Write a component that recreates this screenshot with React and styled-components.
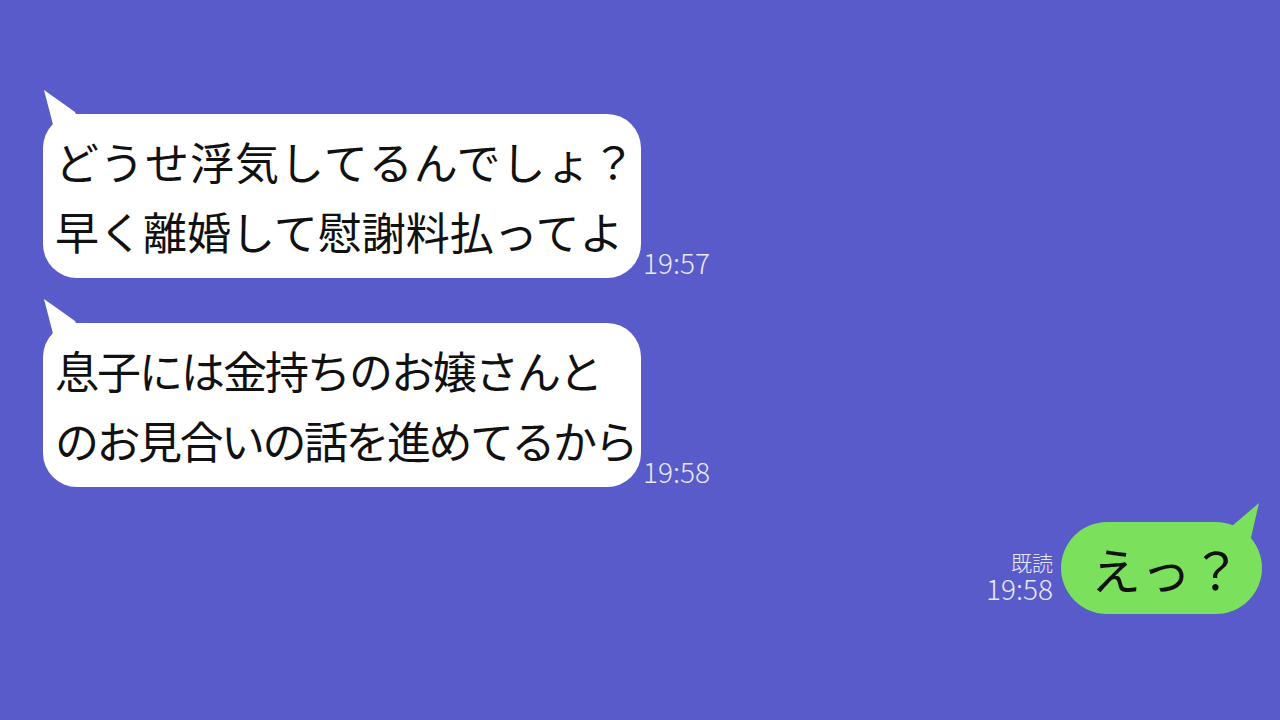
import React from "react";
import styled, { createGlobalStyle } from "styled-components";

const GlobalStyle = createGlobalStyle`
  html, body {
    margin: 0;
    padding: 0;
  }
  body {
    font-family: "Noto Sans CJK JP", "Noto Sans", sans-serif;
  }
`;

const Screen = styled.div`
  width: 1280px;
  height: 720px;
  background: #585bc9;
  display: flex;
  flex-direction: column;
  padding: 114px 18px 0 43px;
  box-sizing: border-box;
  overflow: hidden;
`;

const Row = styled.div`
  display: flex;
  align-items: flex-end;
  justify-content: ${(props) => (props.mine ? "flex-end" : "flex-start")};
  margin-top: ${(props) => props.gap || 0}px;
`;

const Bubble = styled.div`
  position: relative;
  box-sizing: border-box;
  width: ${(props) => props.width}px;
  height: ${(props) => props.height}px;
  border-radius: ${(props) => props.radius}px;
  background: ${(props) => props.color};
  color: #111;
  display: flex;
  flex-direction: column;
  justify-content: center;
  padding-left: ${(props) => props.padLeft}px;
`;

const Line = styled.span`
  display: block;
  font-size: ${(props) => props.size || 44}px;
  line-height: 70px;
  letter-spacing: ${(props) => props.spacing || 0}px;
  white-space: nowrap;
`;

const Tail = styled.svg`
  position: absolute;
  top: ${(props) => props.top}px;
  ${(props) => (props.right ? "right: 0;" : "left: 0;")}
`;

const Time = styled.div`
  color: #e8e8f6;
  font-size: 28px;
  line-height: ${(props) => props.lh || 30}px;
  font-weight: 300;
  margin: 0 0 ${(props) => props.bottom || 0}px ${(props) => props.left || 0}px;
`;

const Meta = styled.div`
  display: flex;
  flex-direction: column;
  align-items: flex-end;
  margin: 0 8px 11px 0;
  color: #e8e8f6;
`;

const Read = styled.div`
  font-size: 21px;
  line-height: 22px;
  font-weight: 300;
`;

const WhiteTail = () => (
  <Tail top={-24} width="50" height="70" viewBox="0 0 50 70">
    <polygon points="1,0 14,50 44,50 32,22" fill="#ffffff" />
  </Tail>
);

const GreenTail = () => (
  <Tail right top={-20} width="34" height="50" viewBox="0 0 34 50">
    <polygon points="31,1 4,24 0,48 20,48 22,40" fill="#7be05b" />
  </Tail>
);

const Incoming = ({ lines, time, gap }) => (
  <Row gap={gap}>
    <Bubble width={598} height={164} radius={34} color="#ffffff" padLeft={12}>
      <WhiteTail />
      {lines.map((l) => (
        <Line key={l.text} spacing={l.spacing}>
          {l.text}
        </Line>
      ))}
    </Bubble>
    <Time left={2} bottom={1}>
      {time}
    </Time>
  </Row>
);

export default function App() {
  return (
    <>
      <GlobalStyle />
      <Screen>
        <Incoming
          time="19:57"
          lines={[
            { text: "どうせ浮気してるんでしょ？", spacing: 1 },
            { text: "早く離婚して慰謝料払ってよ" },
          ]}
        />
        <Incoming
          gap={45}
          time="19:58"
          lines={[
            { text: "息子には金持ちのお嬢さんと", spacing: -2 },
            { text: "のお見合いの話を進めてるから", spacing: -2.5 },
          ]}
        />
        <Row mine gap={35}>
          <Meta>
            <Read>既読</Read>
            <Time lh={30}>19:58</Time>
          </Meta>
          <Bubble width={201} height={92} radius={46} color="#7be05b" padLeft={30}>
            <GreenTail />
            <Line size={50}>えっ？</Line>
          </Bubble>
        </Row>
      </Screen>
    </>
  );
}
